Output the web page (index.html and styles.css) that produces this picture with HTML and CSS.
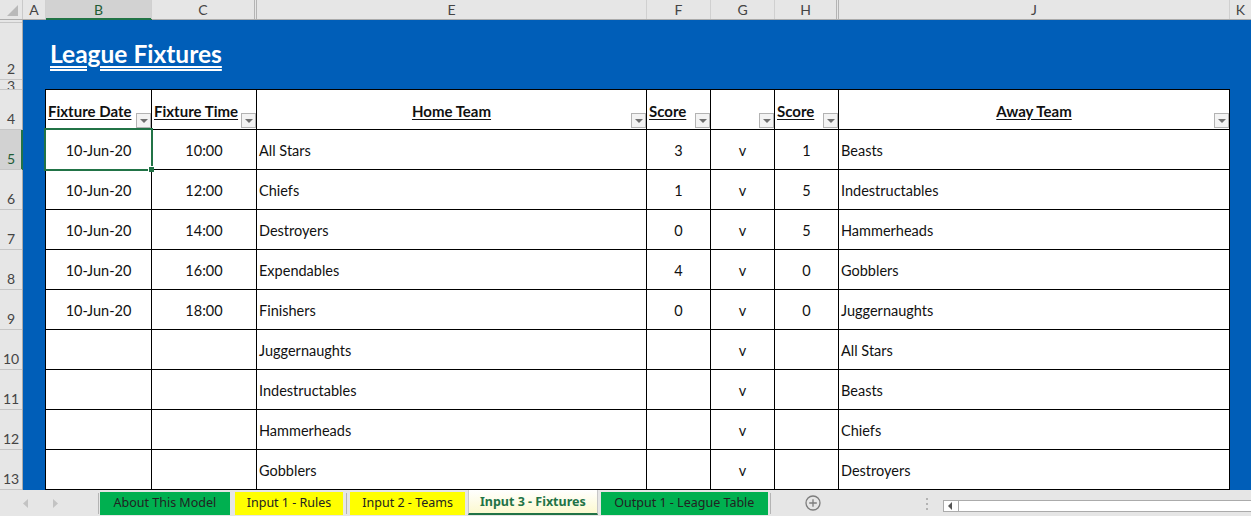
FILE: index.html
```html
<!DOCTYPE html>
<html lang="en">
<head>
<meta charset="UTF-8">
<meta name="viewport" content="width=device-width, initial-scale=1.0">
<title>League Fixtures</title>
<link rel="stylesheet" href="styles.css">
</head>
<body>
<div class="excel">
    <div class="col-bar">
        <div class="corner">
            <svg width="22" height="19" viewBox="0 0 22 19"><polygon points="18,5 18,16 7,16" fill="#b9b9b9"/></svg>
        </div>
        <div class="col-head w-a">A</div>
        <div class="col-head w-b active">B</div>
        <div class="col-head w-c hide-next">C</div>
        <div class="col-head w-e">E</div>
        <div class="col-head w-f">F</div>
        <div class="col-head w-g">G</div>
        <div class="col-head w-h hide-next">H</div>
        <div class="col-head w-j">J</div>
        <div class="col-head w-k">K</div>
    </div>

    <div class="sheet-body">
        <div class="row-bar">
            <div class="row-head r1">1</div>
            <div class="row-head r2">2</div>
            <div class="row-head r3">3</div>
            <div class="row-head">4</div>
            <div class="row-head active">5</div>
            <div class="row-head">6</div>
            <div class="row-head">7</div>
            <div class="row-head">8</div>
            <div class="row-head">9</div>
            <div class="row-head">10</div>
            <div class="row-head">11</div>
            <div class="row-head">12</div>
            <div class="row-head">13</div>
        </div>

        <div class="sheet">
            <div class="title-area">
                <h1>League Fixtures</h1>
            </div>
            <table class="fixtures">
                <colgroup>
                    <col style="width:106px">
                    <col style="width:105px">
                    <col style="width:390px">
                    <col style="width:64px">
                    <col style="width:64px">
                    <col style="width:64px">
                    <col style="width:391px">
                </colgroup>
                <thead>
                    <tr>
                        <th>Fixture Date<span class="filter"></span></th>
                        <th>Fixture Time<span class="filter"></span></th>
                        <th class="c">Home Team<span class="filter"></span></th>
                        <th>Score<span class="filter"></span></th>
                        <th><span class="filter"></span></th>
                        <th>Score<span class="filter"></span></th>
                        <th class="c">Away Team<span class="filter"></span></th>
                    </tr>
                </thead>
                <tbody>
                    <tr>
                        <td class="c active">10-Jun-20</td>
                        <td class="c">10:00</td>
                        <td>All Stars</td>
                        <td class="c">3</td>
                        <td class="c">v</td>
                        <td class="c">1</td>
                        <td>Beasts</td>
                    </tr>
                    <tr>
                        <td class="c">10-Jun-20</td>
                        <td class="c">12:00</td>
                        <td>Chiefs</td>
                        <td class="c">1</td>
                        <td class="c">v</td>
                        <td class="c">5</td>
                        <td>Indestructables</td>
                    </tr>
                    <tr>
                        <td class="c">10-Jun-20</td>
                        <td class="c">14:00</td>
                        <td>Destroyers</td>
                        <td class="c">0</td>
                        <td class="c">v</td>
                        <td class="c">5</td>
                        <td>Hammerheads</td>
                    </tr>
                    <tr>
                        <td class="c">10-Jun-20</td>
                        <td class="c">16:00</td>
                        <td>Expendables</td>
                        <td class="c">4</td>
                        <td class="c">v</td>
                        <td class="c">0</td>
                        <td>Gobblers</td>
                    </tr>
                    <tr>
                        <td class="c">10-Jun-20</td>
                        <td class="c">18:00</td>
                        <td>Finishers</td>
                        <td class="c">0</td>
                        <td class="c">v</td>
                        <td class="c">0</td>
                        <td>Juggernaughts</td>
                    </tr>
                    <tr>
                        <td></td>
                        <td></td>
                        <td>Juggernaughts</td>
                        <td></td>
                        <td class="c">v</td>
                        <td></td>
                        <td>All Stars</td>
                    </tr>
                    <tr>
                        <td></td>
                        <td></td>
                        <td>Indestructables</td>
                        <td></td>
                        <td class="c">v</td>
                        <td></td>
                        <td>Beasts</td>
                    </tr>
                    <tr>
                        <td></td>
                        <td></td>
                        <td>Hammerheads</td>
                        <td></td>
                        <td class="c">v</td>
                        <td></td>
                        <td>Chiefs</td>
                    </tr>
                    <tr>
                        <td></td>
                        <td></td>
                        <td>Gobblers</td>
                        <td></td>
                        <td class="c">v</td>
                        <td></td>
                        <td>Destroyers</td>
                    </tr>
                </tbody>
            </table>
        </div>
    </div>

    <div class="tab-bar">
        <div class="sheet-nav">
            <svg width="6" height="9" viewBox="0 0 6 9"><polygon points="5,0 5,9 0,4.5" fill="#c3c3c3"/></svg>
            <svg width="6" height="9" viewBox="0 0 6 9"><polygon points="1,0 1,9 6,4.5" fill="#c3c3c3"/></svg>
        </div>
        <div class="tab-sep"></div>
        <div class="tab green first">About This Model</div>
        <div class="tab yellow">Input 1 - Rules</div>
        <div class="tab-sep mid"></div>
        <div class="tab yellow">Input 2 - Teams</div>
        <div class="tab current">Input 3 - Fixtures</div>
        <div class="tab green last">Output 1 - League Table</div>
        <div class="tab-sep end"></div>
        <div class="new-sheet">
            <svg width="16" height="16" viewBox="0 0 16 16">
                <circle cx="8" cy="8" r="7" fill="none" stroke="#7d7d7d" stroke-width="1.3"/>
                <path d="M8 4.2v7.6M4.2 8h7.6" stroke="#7d7d7d" stroke-width="1.3"/>
            </svg>
        </div>
        <div class="grip">
            <svg width="3" height="12" viewBox="0 0 3 12"><rect x="0" y="0" width="2" height="2" fill="#b3b3b3"/><rect x="0" y="5" width="2" height="2" fill="#b3b3b3"/><rect x="0" y="10" width="2" height="2" fill="#b3b3b3"/></svg>
        </div>
        <div class="h-scroll">
            <div class="scroll-btn">
                <svg width="5" height="8" viewBox="0 0 5 8"><polygon points="4,0 4,8 0,4" fill="#555"/></svg>
            </div>
        </div>
    </div>
</div>
</body>
</html>
```

FILE: styles.css
```css
* {
    box-sizing: border-box;
}
html, body {
    margin: 0;
    padding: 0;
}
body {
    width: 1251px;
    height: 516px;
    overflow: hidden;
    background: #e6e6e6;
    font-family: Lato, "Liberation Sans", sans-serif;
}

/* column letters */
.col-bar {
    display: flex;
    height: 20px;
    background: #e6e6e6;
    border-bottom: 1px solid #ababab;
}
.corner {
    width: 23px;
    border-right: 1px solid #c9c9c9;
}
.corner svg {
    display: block;
}
.col-head {
    border-right: 1px solid #d0d0d0;
    font-size: 14px;
    color: #444;
    text-align: center;
    line-height: 19px;
}
.col-head.active {
    background: #d2d2d2;
    color: #1f5c35;
    box-shadow: inset 0 -1px 0 #217346, 0 1px 0 #217346;
}
.col-head.hide-next {
    border-right: 3px double #b4b4b4;
}
.w-a { width: 23px; }
.w-b { width: 106px; }
.w-c { width: 105px; }
.w-e { width: 390px; }
.w-f { width: 64px; }
.w-g { width: 64px; }
.w-h { width: 64px; }
.w-j { width: 391px; }
.w-k { flex: 1; border-right: none; }

/* rows */
.sheet-body {
    display: flex;
    height: 470px;
}
.row-bar {
    width: 23px;
    background: #e6e6e6;
    border-right: 1px solid #ababab;
}
.row-head {
    height: 40px;
    border-bottom: 1px solid #c6c6c6;
    display: flex;
    align-items: flex-end;
    justify-content: center;
    padding-bottom: 2px;
    overflow: hidden;
    font-size: 14px;
    line-height: 16px;
    color: #444;
}
.row-head.r1 { height: 3px; padding-bottom: 0; align-items: flex-start; }
.row-head.r2 { height: 57px; }
.row-head.r3 { height: 10px; padding-bottom: 0; align-items: flex-start; line-height: 11px; }
.row-head.active {
    background: #d2d2d2;
    color: #1f5c35;
    box-shadow: inset -1px 0 0 #217346, 1px 0 0 #217346;
}

/* blue sheet */
.sheet {
    flex: 1;
    background: #005eb8;
    padding-left: 22px;
    overflow: hidden;
}
.title-area {
    height: 69px;
    padding-top: 19px;
}
.title-area h1 {
    margin: 0 0 0 5px;
    font-size: 24.5px;
    line-height: 29px;
    font-weight: bold;
    color: #fff;
    text-decoration: underline double;
    text-underline-offset: 3px;
}

.fixtures {
    border-collapse: separate;
    border-spacing: 0;
    table-layout: fixed;
    width: 1185px;
    border-top: 1px solid #000;
    border-left: 1px solid #000;
    background: #fff;
}
.fixtures tr {
    height: 40px;
}
.fixtures th, .fixtures td {
    border-right: 1px solid #000;
    border-bottom: 1px solid #000;
    padding: 1px 2px 0;
    font-size: 14.5px;
    color: #111;
    white-space: nowrap;
    vertical-align: middle;
    text-align: left;
}
.fixtures th {
    position: relative;
    padding-top: 2px;
    font-size: 15px;
    font-weight: bold;
    text-decoration: underline;
    text-underline-offset: 2px;
}
.fixtures .c {
    text-align: center;
}
.filter {
    position: absolute;
    right: 0;
    bottom: 1px;
    width: 15px;
    height: 15px;
    border: 1px solid #b3b3b3;
    background: #f3f3f3;
}
.filter::after {
    content: "";
    position: absolute;
    left: 3px;
    top: 5px;
    border-left: 4px solid transparent;
    border-right: 4px solid transparent;
    border-top: 4px solid #6f6f6f;
}
.fixtures td.active {
    position: relative;
}
.fixtures td.active::after {
    content: "";
    position: absolute;
    top: -2px;
    left: -2px;
    right: -2px;
    bottom: -2px;
    border: 2px solid #217346;
}
.fixtures td.active::before {
    content: "";
    position: absolute;
    right: -3px;
    bottom: -3px;
    width: 5px;
    height: 5px;
    background: #217346;
    box-shadow: -1px -1px 0 #fff;
    z-index: 1;
}

/* sheet tabs */
.tab-bar {
    display: flex;
    align-items: flex-start;
    height: 26px;
    background: #e6e6e6;
    font-family: "Noto Sans", "Open Sans", sans-serif;
    font-size: 12.5px;
}
.sheet-nav {
    width: 98px;
    height: 26px;
    display: flex;
    align-items: center;
    gap: 23px;
    padding-left: 23px;
}
.tab-sep {
    width: 1px;
    height: 21px;
    margin: 3px 1px 0 0;
    background: #b4b4b4;
}
.tab-sep.mid {
    margin: 3px 3px 0 3px;
}
.tab-sep.end {
    margin: 3px 0 0 2px;
}
.tab {
    height: 23px;
    margin-top: 2px;
    padding: 0 12px;
    line-height: 22px;
    color: #222;
    white-space: nowrap;
}
.tab.first {
    margin-right: 5px;
    padding: 0 13.5px;
}
.tab.last {
    padding: 0 13.5px;
}
.tab.green {
    background: #00b050;
}
.tab.yellow {
    background: #ffff00;
}
.tab.yellow + .tab {
    margin-left: 3px;
}
.tab.current {
    margin-top: 0;
    height: 25px;
    padding: 0 11px;
    line-height: 24px;
    margin-right: 3px;
    font-weight: bold;
    color: #217346;
    background: linear-gradient(#ffffff, #fcf9cf);
    border-left: 1px solid #c8c8c8;
    border-right: 1px solid #c8c8c8;
    border-bottom: 2px solid #217346;
}
.new-sheet {
    margin: 5px 0 0 34px;
}
.new-sheet svg, .grip svg, .scroll-btn svg {
    display: block;
}
.grip {
    margin: 8px 0 0 105px;
}
.h-scroll {
    flex: 1;
    height: 12px;
    margin: 10px -1px 0 14px;
    border: 1px solid #ababab;
    background: #fff;
}
.scroll-btn {
    width: 15px;
    height: 10px;
    border-right: 1px solid #ababab;
    display: flex;
    align-items: center;
    justify-content: center;
}
```
